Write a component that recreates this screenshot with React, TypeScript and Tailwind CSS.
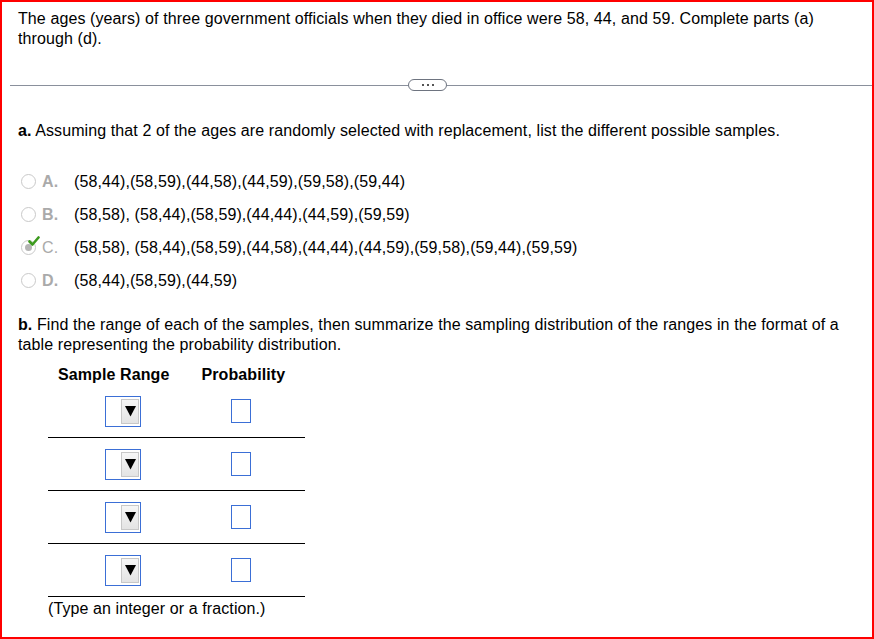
import React from "react";

const options = [
  { letter: "A.", text: "(58,44),(58,59),(44,58),(44,59),(59,58),(59,44)", picked: false },
  { letter: "B.", text: "(58,58), (58,44),(58,59),(44,44),(44,59),(59,59)", picked: false },
  {
    letter: "C.",
    text: "(58,58), (58,44),(58,59),(44,58),(44,44),(44,59),(59,58),(59,44),(59,59)",
    picked: true,
  },
  { letter: "D.", text: "(58,44),(58,59),(44,59)", picked: false },
];

function Radio({ picked }: { picked: boolean }) {
  return (
    <span className="relative inline-flex h-[15px] w-[15px] shrink-0 items-center justify-center rounded-full border border-[#c9c9c9] bg-white">
      {picked && <span className="h-[7px] w-[7px] rounded-full bg-[#b4b4b4]" />}
      {picked && (
        <svg className="absolute -right-[5px] -top-[5px]" width="12" height="10" viewBox="0 0 12 10">
          <path d="M1.5 5.5 L4.5 8.5 L10.5 1.5" fill="none" stroke="#3c9a1e" strokeWidth="2.6" strokeLinecap="round" strokeLinejoin="round" />
        </svg>
      )}
    </span>
  );
}

function Dropdown() {
  return (
    <div className="flex h-[31px] w-[36px] items-center justify-end border border-[#3b6fd6] bg-white pr-[1px]">
      <div className="flex h-[25px] w-[18px] items-center justify-center border border-[#c8c8c8] bg-gradient-to-b from-[#f6f6f6] to-[#e4e4e4]">
        <svg width="11" height="12" viewBox="0 0 11 12">
          <polygon points="0,1 11,1 5.5,11.5" fill="#000" />
        </svg>
      </div>
    </div>
  );
}

export default function App() {
  return (
    <div className="h-[639px] w-[874px] overflow-hidden border-2 border-[#ff0000] bg-white font-['Liberation_Sans',Arial,sans-serif] text-[16px] leading-[20px] tracking-[0.1px] text-black">
      <p className="px-4 pt-[7px]">
        The ages (years) of three government officials when they died in office were 58, 44, and 59. Complete parts (a)
        through (d).
      </p>

      <div className="mt-[30px] flex h-[12px] items-center pl-2">
        <div className="h-px w-[398px] bg-[#8a909c]" />
        <div className="flex h-[12px] w-[39px] items-center justify-center gap-[3px] rounded-full border border-[#6e7480] bg-white">
          <span className="h-[2px] w-[2px] bg-[#555]" />
          <span className="h-[2px] w-[2px] bg-[#555]" />
          <span className="h-[2px] w-[2px] bg-[#555]" />
        </div>
        <div className="h-px flex-1 bg-[#8a909c]" />
      </div>

      <p className="mt-[30px] px-4">
        <b>a.</b> Assuming that 2 of the ages are randomly selected with replacement, list the different possible samples.
      </p>

      <div className="mt-[24px]">
        {options.map((o) => (
          <div key={o.letter} className="flex h-[33px] items-center pl-[19px]">
            <Radio picked={o.picked} />
            <span className={`ml-[6px] w-[32px] text-[#aaaaaa] ${o.picked ? "font-normal" : "font-bold"}`}>{o.letter}</span>
            <span>{o.text}</span>
          </div>
        ))}
      </div>

      <p className="mt-[18px] px-4">
        <b>b.</b> Find the range of each of the samples, then summarize the sampling distribution of the ranges in the format of a
        table representing the probability distribution.
      </p>

      <div className="ml-[46px] mt-[10px] w-[257px]">
        <div className="flex font-bold">
          <span className="ml-[10px]">Sample Range</span>
          <span className="ml-[32px]">Probability</span>
        </div>
        {[0, 1, 2, 3].map((i) => (
          <div key={i} className="flex h-[53px] items-center border-b border-black">
            <div className="ml-[57px]">
              <Dropdown />
            </div>
            <div className="ml-[90px] h-[24px] w-[20px] border border-[#3b6fd6] bg-white" />
          </div>
        ))}
        <p className="mt-[2px]">(Type an integer or a fraction.)</p>
      </div>
    </div>
  );
}
